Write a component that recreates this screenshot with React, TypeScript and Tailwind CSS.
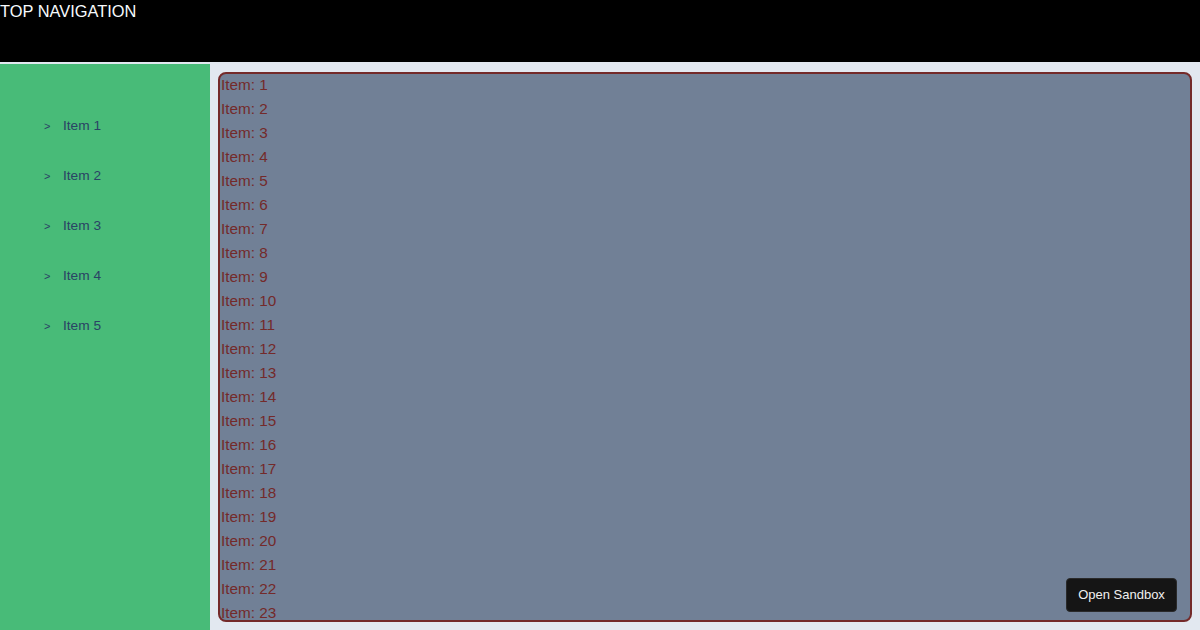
import React from "react";

export default function App() {
  const items = Array.from({ length: 30 }, (_, i) => i + 1);
  const nav = [1, 2, 3, 4, 5];
  return (
    <div className="relative flex h-[630px] w-[1200px] flex-col overflow-hidden bg-[#e2e8f0] font-['Liberation_Sans',Arial,sans-serif]">
      <header className="h-[62px] shrink-0 bg-black text-[16.4px] leading-[22px] text-[#f7fafc]">
        TOP NAVIGATION
      </header>
      <div className="mt-[2px] flex min-h-0 flex-1">
        <aside className="w-[210px] shrink-0 bg-[#48bb78] pt-[37px]">
          {nav.map((n) => (
            <div key={n} className="flex h-[50px] items-center pl-[44px] text-[13.7px] text-[#2a4365]">
              <span className="w-[19px] text-[11px]">&gt;</span>
              <span>Item {n}</span>
            </div>
          ))}
        </aside>
        <main className="flex min-w-0 flex-1 p-2">
          <div className="flex-1 overflow-hidden rounded-lg border-2 border-[#742a2a] bg-[#718096] pl-[1px]">
            <div className="-mt-px">
              {items.map((n) => (
                <div key={n} className="text-[15.3px] leading-6 text-[#742a2a]">
                  Item: {n}
                </div>
              ))}
            </div>
          </div>
        </main>
      </div>
      <button className="absolute bottom-[18px] right-[23px] h-[34px] w-[111px] rounded border border-[#2a2a2a] bg-[#151515] text-[13px] text-[#f0f0f0]">
        Open Sandbox
      </button>
    </div>
  );
}
